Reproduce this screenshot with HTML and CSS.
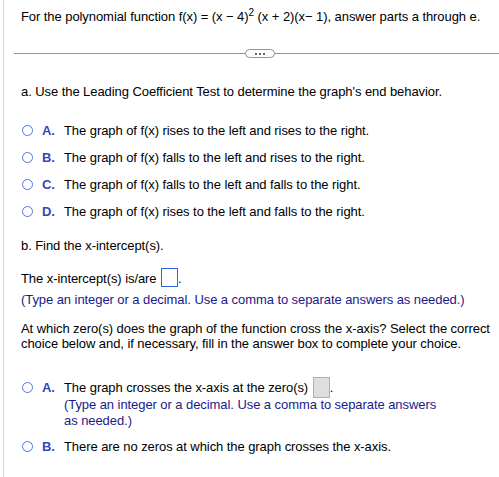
FILE: index.html
```html
<!DOCTYPE html>
<html>
<head>
<meta charset="utf-8">
<link rel="stylesheet" href="styles.css">
</head>
<body>
<div class="page">
  <p class="q">For the polynomial function f(x) = (x &minus; 4)<sup>2</sup> (x + 2)(x&minus; 1), answer parts a through e.</p>
  <div class="divider"><span class="more"><i></i><i></i><i></i></span></div>
  <p class="part">a. Use the Leading Coefficient Test to determine the graph's end behavior.</p>
  <div class="choices">
    <div class="choice"><span class="radio"></span><span class="lab">A.</span><span class="txt">The graph of f(x) rises to the left and rises to the right.</span></div>
    <div class="choice"><span class="radio"></span><span class="lab">B.</span><span class="txt">The graph of f(x) falls to the left and rises to the right.</span></div>
    <div class="choice"><span class="radio"></span><span class="lab">C.</span><span class="txt">The graph of f(x) falls to the left and falls to the right.</span></div>
    <div class="choice"><span class="radio"></span><span class="lab">D.</span><span class="txt">The graph of f(x) rises to the left and falls to the right.</span></div>
  </div>
  <p class="part partb">b. Find the x-intercept(s).</p>
  <p class="line xint">The x-intercept(s) is/are <span class="box"></span>.</p>
  <p class="hint">(Type an integer or a decimal. Use a comma to separate answers as needed.)</p>
  <p class="line cross">At which zero(s) does the graph of the function cross the x-axis? Select the correct<br>choice below and, if necessary, fill in the answer box to complete your choice.</p>
  <div class="choices choices2">
    <div class="choice"><span class="radio"></span><span class="lab">A.</span><span class="txt">The graph crosses the x-axis at the zero(s) <span class="box gray"></span>.<span class="hint hint2">(Type an integer or a decimal. Use a comma to separate answers<br>as needed.)</span></span></div>
    <div class="choice choiceb"><span class="radio"></span><span class="lab">B.</span><span class="txt">There are no zeros at which the graph crosses the x-axis.</span></div>
  </div>
</div>
</body>
</html>
```
FILE: styles.css
```css
html, body {
  margin: 0;
  padding: 0;
  background: #fff;
}
body {
  font-family: "Liberation Sans", Arial, sans-serif;
  font-size: 13px;
  letter-spacing: -0.07px;
  color: #000;
  width: 499px;
  height: 477px;
  overflow: hidden;
}
.page {
  margin-left: 3px;
  border-left: 1px solid #d4d4d4;
  padding: 9px 0 0 17px;
  min-height: 477px;
  box-sizing: border-box;
}
p { margin: 0; line-height: 15px; white-space: nowrap; }
.q sup { font-size: 10px; line-height: 0; vertical-align: 5px; }
.divider {
  margin: 25px 0 0 -7px;
  height: 9px;
  display: flex;
  align-items: center;
  justify-content: center;
  position: relative;
}
.divider::before {
  content: "";
  position: absolute;
  left: 0; right: 0; top: 4px;
  height: 1px;
  background: #8d949b;
}
.more {
  position: relative;
  width: 30px;
  height: 9px;
  box-sizing: border-box;
  border: 1px solid #8d949b;
  border-radius: 5px;
  background: #fff;
  display: flex;
  align-items: center;
  justify-content: center;
  gap: 2px;
  margin-left: 7px;
}
.more i {
  width: 2px; height: 2px;
  background: #5b6670;
}
.part { margin-top: 26px; }
.choices { margin-top: 24px; display: flex; flex-direction: column; gap: 12px; }
.choice {
  display: grid;
  grid-template-columns: 11px 31px 1fr;
  align-items: start;
  line-height: 15px;
  padding-left: 1px;
}
.radio {
  width: 11px; height: 11px;
  box-sizing: border-box;
  border: 1px solid #4f76e0;
  border-radius: 50%;
  margin-top: 2px;
}
.lab {
  font-weight: bold;
  color: #3348c0;
  padding-left: 9px;
}
.txt { white-space: nowrap; }
.partb { margin-top: 19px; }
.xint { margin-top: 18px; }
.box {
  display: inline-block;
  width: 17px; height: 19px;
  box-sizing: border-box;
  border: 1px solid #2a66dc;
  vertical-align: -4px;
  margin-top: -4px;
  margin-left: 1px;
}
.box.gray {
  width: 17px; height: 21px;
  background: #dedede;
  border-color: #92b2ec;
  vertical-align: -6px;
  margin-top: -6px;
}
.hint { color: #1a1a8a; margin-top: 5px; }
.cross { margin-top: 14px; }
.choices2 { margin-top: 29px; gap: 10px; }
.hint2 { display: block; line-height: 16px; margin-top: -1px; }
```
